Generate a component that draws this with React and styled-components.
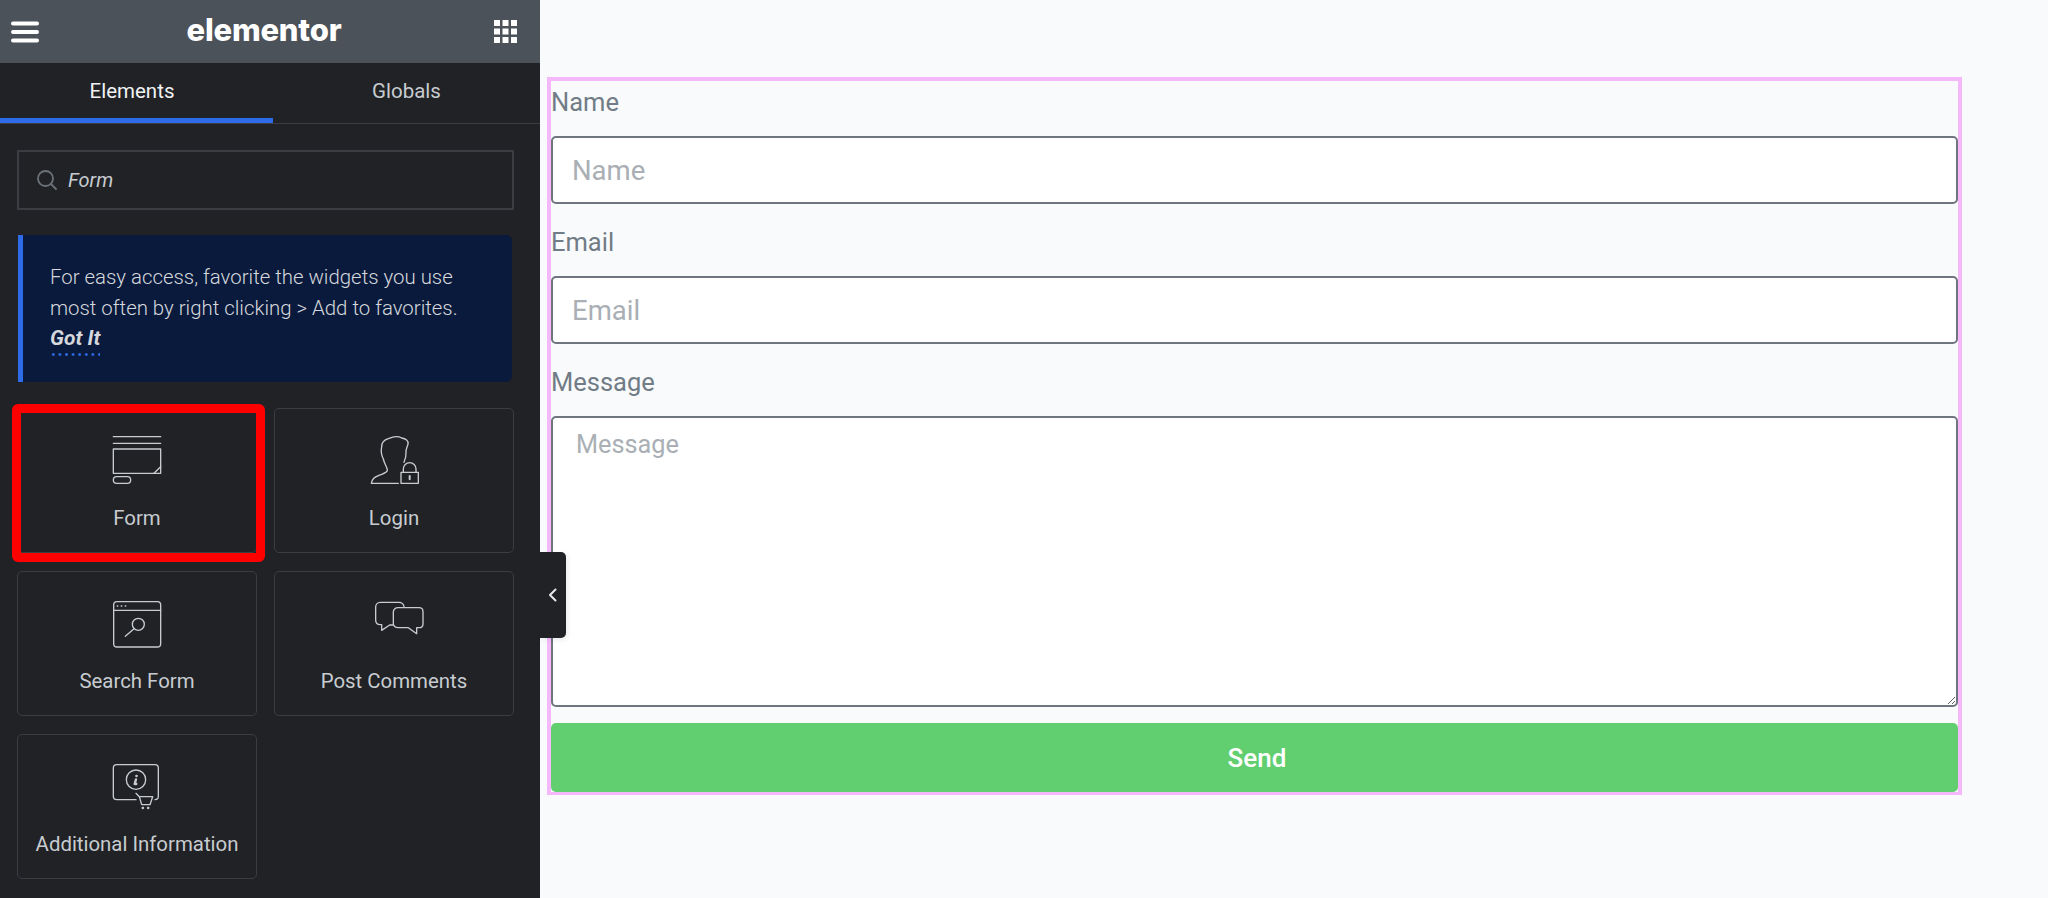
import React from "react";
import styled, { createGlobalStyle } from "styled-components";

const GlobalStyle = createGlobalStyle`
  html, body {
    margin: 0;
    height: 100%;
    overflow: hidden;
    background: #f9fafc;
    font-family: Roboto, "Liberation Sans", sans-serif;
  }
  * { box-sizing: border-box; }
`;

const Page = styled.div`
  display: flex;
  height: 898px;
`;

const Sidebar = styled.aside`
  position: relative;
  flex: 0 0 539px;
  background: #202226;
`;

const TopBar = styled.header`
  height: 63px;
  padding: 0 23px 0 11px;
  display: flex;
  align-items: center;
  justify-content: space-between;
  background: #4c5259;
`;

const Logo = styled.div`
  font-family: Inter, sans-serif;
  font-weight: 800;
  font-size: 31px;
  line-height: 1;
  letter-spacing: -0.2px;
  color: #fff;
  margin: -5px 5px 0 0;
`;

const Tabs = styled.nav`
  height: 61px;
  display: grid;
  grid-template-columns: 273px 1fr;
  border-bottom: 1.5px solid #3a3d42;
`;

const Tab = styled.div`
  display: flex;
  align-items: center;
  justify-content: center;
  padding: ${(p) => (p.$active ? "0 9px 5px 0" : "0 0 5px")};
  font-size: 20.5px;
  color: ${(p) => (p.$active ? "#f1f2f3" : "#c8ccd0")};
  box-shadow: ${(p) => (p.$active ? "inset 0 -5px 0 0 #2d6be8" : "none")};
`;

const Panel = styled.div`
  padding: 26px 26px 0 17px;
`;

const SearchBox = styled.div`
  width: 497px;
  height: 60px;
  padding-left: 17px;
  display: flex;
  align-items: center;
  gap: 10px;
  border: 2px solid #3a3d42;
  font-size: 20px;
  font-style: italic;
  color: #c8ccd0;
`;

const Tip = styled.div`
  margin: 25px 0 26px 1px;
  height: 147px;
  width: 494px;
  padding: 27px 32px 0 27px;
  background: #0a1a3c;
  border-left: 5px solid #2d6be8;
  border-radius: 0 6px 6px 0;
  font-size: 20.4px;
  font-weight: 300;
  line-height: 30.5px;
  color: #d5d8dc;
`;

const GotIt = styled.span`
  display: block;
  width: 50px;
  height: 33px;
  white-space: nowrap;
  font-weight: 700;
  font-style: italic;
  font-size: 21px;
  line-height: 30px;
  background-image: radial-gradient(circle, #2d6be8 1.2px, transparent 1.5px);
  background-size: 6.6px 3px;
  background-repeat: repeat-x;
  background-position: left bottom;
`;

const WidgetGrid = styled.div`
  display: grid;
  grid-template-columns: 240px 240px;
  grid-auto-rows: 145px;
  column-gap: 17px;
  row-gap: 18px;
`;

const Card = styled.div`
  position: relative;
  display: flex;
  flex-direction: column;
  align-items: center;
  padding-top: 25px;
  border: 1.5px solid #3a3d42;
  border-radius: 5px;
  color: #c8ccd0;

  ${(p) =>
    p.$marked &&
    `
    &::after {
      content: "";
      position: absolute;
      top: -5px;
      left: -6px;
      right: -9px;
      bottom: -10px;
      border: 9px solid #fe0000;
      border-radius: 6px;
    }
  `}
`;

const CardLabel = styled.div`
  margin-top: 22px;
  font-size: 20.4px;
  line-height: 24px;
  white-space: nowrap;
`;

const Icon = styled.svg`
  width: 50px;
  height: 50px;
  overflow: visible;
  fill: none;
  stroke: #c8ccd0;
  stroke-width: 4;
  stroke-linecap: round;
  stroke-linejoin: round;
`;

const CollapseHandle = styled.div`
  position: absolute;
  left: 100%;
  top: 552px;
  width: 26px;
  height: 86px;
  display: flex;
  align-items: center;
  justify-content: center;
  background: #202226;
  border-radius: 0 5px 5px 0;
  box-shadow: 2px 2px 5px rgba(0, 0, 0, 0.08);
`;

const Canvas = styled.main`
  flex: 1;
  padding: 77px 0 0 7px;
`;

const FormFrame = styled.form`
  width: 1415px;
  height: 718px;
  border: 4px solid #f5b9fb;
  border-bottom-width: 3px;
  display: flex;
  flex-direction: column;
`;

const Label = styled.label`
  display: block;
  height: 55px;
  font-size: 25.5px;
  line-height: 42px;
  color: #717c86;
`;

const fieldStyles = `
  display: block;
  width: 100%;
  background: #fff;
  border: 2px solid #6f7680;
  border-radius: 5px;
  font-family: Roboto, sans-serif;
  outline: none;
  &::placeholder { color: #a9afb4; opacity: 1; }
`;

const Input = styled.input`
  ${fieldStyles}
  height: 68px;
  margin-bottom: 17px;
  padding: 0 19px;
  font-size: 27.5px;
`;

const TextArea = styled.textarea`
  ${fieldStyles}
  height: 291px;
  padding: 12px 23px;
  font-size: 25.3px;
  line-height: 30px;
`;

const SendButton = styled.button`
  margin-top: 16px;
  height: 69px;
  padding-left: 11px;
  border: 0;
  border-radius: 5px;
  background: #61ce70;
  color: #fff;
  font-family: Roboto, sans-serif;
  font-size: 26px;
  font-weight: 500;
`;

const FormIcon = () => (
  <Icon viewBox="0 0 150 150">
    <path d="M4 8H146M4 28H146" />
    <rect x="4" y="45" width="142" height="73" />
    <path d="M146 98L126 118" />
    <rect x="4" y="128" width="52" height="20" rx="10" />
  </Icon>
);

const LoginIcon = () => (
  <Icon viewBox="0 0 150 150">
    <path d="M88 148H7C9 135 15 130 30 124C45 118 56 116 55 108C54 98 46 90 43 75C36 62 36 48 38 38C38 26 45 18 58 14C72 8 88 6 98 12C110 14 119 20 117 30C115 40 110 45 111 55C112 68 108 78 105 85" />
    <rect x="96" y="115" width="52" height="33" />
    <path d="M103 115V105a19 19 0 0 1 38 0V115" />
    <path d="M122 126V136" strokeWidth="6" />
  </Icon>
);

const SearchFormIcon = () => (
  <Icon viewBox="0 0 150 150">
    <rect x="5" y="14" width="141" height="136" rx="10" />
    <path d="M5 40H146" />
    <path d="M16 27H17M28 27H29M40 27H41" strokeWidth="5" />
    <circle cx="79" cy="82" r="18" />
    <path d="M66 95L40 118" />
  </Icon>
);

const CommentsIcon = () => (
  <Icon viewBox="0 0 150 150">
    <path d="M105 28C103 20 98 16 90 16H34C26 16 20 22 20 30V70C20 78 26 83 34 83H38V100L62 84H73" />
    <path d="M87 32H150C158 32 162 38 162 44V80C162 88 158 92 150 92H143V110L118 92H87C79 92 73 86 73 80V44C73 38 79 32 87 32Z" />
  </Icon>
);

const InfoCartIcon = () => (
  <Icon viewBox="0 0 150 150">
    <path d="M72 119H14C8 119 4 115 4 109V24C4 18 8 14 14 14H129C135 14 139 18 139 24V109C139 115 135 119 129 119" />
    <circle cx="72" cy="59" r="29" />
    <path d="M73 48H74M72 58L68 72H73" strokeWidth="7" />
    <path d="M72 100L82 110H122L114 134H89L82 110" />
    <path d="M92 144H93M108 144H109" strokeWidth="7" />
  </Icon>
);

const widgets = [
  { label: "Form", icon: FormIcon, marked: true },
  { label: "Login", icon: LoginIcon },
  { label: "Search Form", icon: SearchFormIcon },
  { label: "Post Comments", icon: CommentsIcon },
  { label: "Additional Information", icon: InfoCartIcon },
];

function App() {
  return (
    <Page>
      <GlobalStyle />
      <Sidebar>
        <TopBar>
          <svg width="28" height="22" viewBox="0 0 28 22">
            <path d="M2 2.5H26M2 11H26M2 19.5H26" stroke="#fff" strokeWidth="4" strokeLinecap="round" />
          </svg>
          <Logo>elementor</Logo>
          <svg width="23" height="23" viewBox="0 0 23 23" fill="#fff">
            {[0, 8.5, 17].map((y) =>
              [0, 8.5, 17].map((x) => <rect key={`${x}-${y}`} x={x} y={y} width="6" height="6" />)
            )}
          </svg>
        </TopBar>
        <Tabs>
          <Tab $active>Elements</Tab>
          <Tab>Globals</Tab>
        </Tabs>
        <Panel>
          <SearchBox>
            <svg width="22" height="22" viewBox="0 0 22 22" fill="none" stroke="#6d7278" strokeWidth="1.8" strokeLinecap="round">
              <circle cx="9.5" cy="9.5" r="7.5" />
              <path d="M15 15L20 20" />
            </svg>
            Form
          </SearchBox>
          <Tip>
            For easy access, favorite the widgets you use most often by right clicking &gt; Add to favorites.
            <GotIt>Got It</GotIt>
          </Tip>
          <WidgetGrid>
            {widgets.map(({ label, icon: WidgetIcon, marked }) => (
              <Card key={label} $marked={marked}>
                <WidgetIcon />
                <CardLabel>{label}</CardLabel>
              </Card>
            ))}
          </WidgetGrid>
        </Panel>
        <CollapseHandle>
          <svg width="10" height="14" viewBox="0 0 10 14" fill="none" stroke="#e6e8ea" strokeWidth="2" strokeLinecap="round" strokeLinejoin="round">
            <path d="M7.5 1.5L2 7L7.5 12.5" />
          </svg>
        </CollapseHandle>
      </Sidebar>
      <Canvas>
        <FormFrame onSubmit={(e) => e.preventDefault()}>
          <Label htmlFor="name">Name</Label>
          <Input id="name" placeholder="Name" />
          <Label htmlFor="email">Email</Label>
          <Input id="email" placeholder="Email" />
          <Label htmlFor="message">Message</Label>
          <TextArea id="message" placeholder="Message" />
          <SendButton type="submit">Send</SendButton>
        </FormFrame>
      </Canvas>
    </Page>
  );
}

export default App;
